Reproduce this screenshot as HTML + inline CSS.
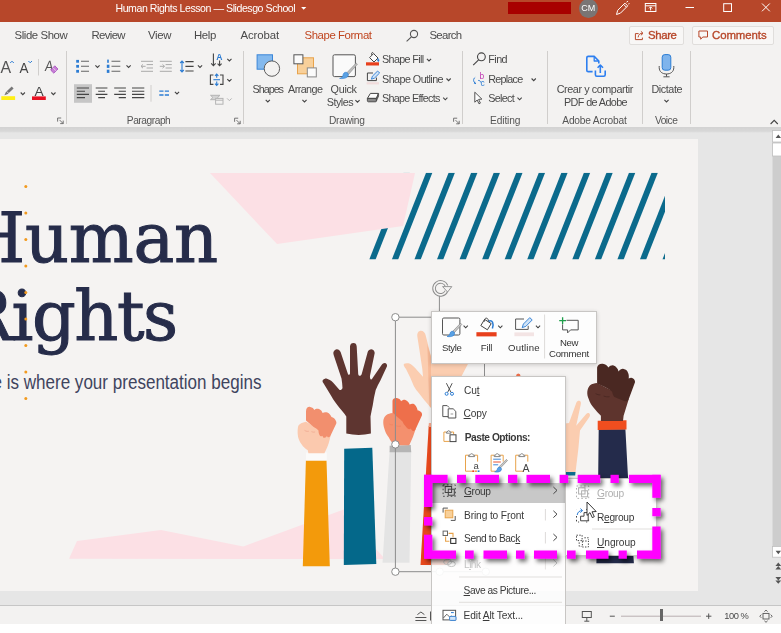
<!DOCTYPE html>
<html lang="en">
<head>
<meta charset="utf-8">
<title>Human Rights Lesson — Slidesgo School</title>
<style>
*{box-sizing:border-box;margin:0;padding:0}
html,body{width:781px;height:633px;overflow:hidden;background:#fff}
body{position:relative;font-family:"Liberation Sans",sans-serif;color:#444;font-size:11px}
.abs{position:absolute}
.t{position:absolute;white-space:nowrap;line-height:1;font-family:"Liberation Sans",sans-serif;color:#4a4a4a}
svg{position:absolute;overflow:visible}
#titlebar{left:0;top:0;width:781px;height:22px;background:#b7472a}
#ribbon{left:0;top:22px;width:781px;height:105px;background:#f3f2f1}
#rshadow{left:0;top:127px;width:781px;height:6px;background:linear-gradient(#d2d2d2 0%,#d8d8d8 70%,#e6e6e6 100%)}
#gap{left:0;top:127px;width:781px;height:479px;background:#e6e6e6}
#slide{left:0;top:139px;width:698px;height:452px;background:#f5f3f2;overflow:hidden}
#status{left:0;top:605px;width:781px;height:19px;background:#f3f2f1;border-top:1px solid #c6c6c6}
.sep{position:absolute;width:1px;background:#d0cecc;top:51px;height:73px}
.btn{position:absolute;border:1px solid #e0dedc;background:#f8f7f6;border-radius:2px}
u{text-decoration:underline;text-underline-offset:1px}
</style>
</head>
<body>
<div id="titlebar" class="abs"></div>
<div id="ribbon" class="abs"></div>
<div id="gap" class="abs"></div>
<div id="rshadow" class="abs"></div>
<div class="sep" style="left:66.1px"></div>
<div class="sep" style="left:242.8px"></div>
<div class="sep" style="left:462.2px"></div>
<div class="sep" style="left:547.3px"></div>
<div class="sep" style="left:642px"></div>
<div class="sep" style="left:690.1px"></div>
<div class="btn" style="left:629px;top:26px;width:55px;height:19px"></div>
<div class="btn" style="left:692px;top:26px;width:82px;height:19px"></div>
<div class="abs" style="left:507.5px;top:2px;width:63.5px;height:11.6px;background:#a80000"></div>
<div class="abs" style="left:578.7px;top:-1.2px;width:19.4px;height:19.4px;border-radius:50%;background:#7a7574"></div>
<svg width="781" height="140" viewBox="0 0 781 140" style="left:0;top:0;will-change:transform" fill="none" stroke-linecap="butt">
<defs>
<path id="chev" d="M-2.1,-1.1 L0,1 L2.1,-1.1" stroke="#444" stroke-width="1.1" fill="none"/>
<g id="dlg" stroke="#666" stroke-width="0.9" fill="none"><path d="M0.4,4 V0.4 H4"/><path d="M2.3,2.3 L6,6 M6,3 V6 H3"/></g>
</defs>
<!-- title bar icons -->
<path d="M303.7,7 l2.6,2.8 l2.6,-2.8 z" fill="#fff" transform="translate(-2.6,0)"/>
<g stroke="#fff" stroke-width="1" fill="none">
<path d="M616.5,14.5 l1.2,-4.2 l7.2,-7.2 l2.8,2.8 l-7.2,7.2 z M623.6,4.4 l2.8,2.8 M626.5,2.2 l1.6,-1 M628.3,4 l1.2,-0.4"/>
<rect x="645.3" y="3.5" width="10.6" height="8"/><path d="M645.3,5.8 h10.6 M650.6,7 v3.4 M649,8.4 l1.6,-1.6 l1.6,1.6"/>
<path d="M685.5,7.5 h8.5"/>
<rect x="723.700" y="3.700" width="7.800" height="7.800"/>
<path d="M762,3.500 l7.800,7.800 M769.800,3.500 l-7.800,7.800"/>
</g>
<!-- search -->
<g stroke="#555" stroke-width="1.1"><circle cx="414" cy="34" r="3.6"/><path d="M411.4,36.8 L406.6,41.4"/></g>
<!-- share / comments icons -->
<g stroke="#b7472a" stroke-width="1" fill="none">
<path d="M638.600,33.600 h-3.200 v6 h7 v-2"/><path d="M638.100,37.400 c0.300,-2.900 2,-4.200 4.600,-4.200 M640.900,31.300 l2.100,2 l-2.100,2"/>
<path d="M698.900,31 h8.600 v6 h-4.600 l-2.200,2.200 v-2.200 h-1.800 z"/>
</g>
<!-- collapse ribbon -->
<path d="M770.6,124 l3.6,-3.6 l3.6,3.6" stroke="#444" stroke-width="1.1"/>

<!-- Font group remnants -->
<text x="0.400" y="73" font-family="Liberation Sans,sans-serif" font-size="17" fill="#555" stroke="none" textLength="10.600" lengthAdjust="spacingAndGlyphs">A</text>
<path d="M10.2,63 l1.8,-1.8 l1.8,1.8" stroke="#2b7cd3" stroke-width="1"/>
<text x="19.6" y="73" font-family="Liberation Sans,sans-serif" font-size="14" fill="#444" stroke="none" textLength="9" lengthAdjust="spacingAndGlyphs">A</text>
<path d="M28.4,61 l1.8,1.8 l1.8,-1.8" stroke="#2b7cd3" stroke-width="1"/>
<path d="M38.5,59 v16.5" stroke="#d0cecc" stroke-width="1"/>
<text x="44.6" y="71" font-family="Liberation Sans,sans-serif" font-size="15" fill="#555" stroke="none" textLength="8.4" lengthAdjust="spacingAndGlyphs" transform="skewX(-6) translate(7.4,0)">A</text>
<path d="M50.6,70 l4.2,-4.2 l3.2,3.2 l-4.2,4.2 z" fill="#c77ed6" stroke="#a74fbf" stroke-width="0.8"/>
<path d="M52.9,67.7 l3.2,3.2" stroke="#f3f2f1" stroke-width="0.7"/>
<!-- highlighter -->
<path d="M4.4,95.2 l1.5,-3.300 l5.800,-5.400 l1.900,1.900 l-5.800,5.600 z" fill="#777" stroke="none"/>
<path d="M6.700,91.400 l2,2" stroke="#f3f2f1" stroke-width="0.8"/>
<rect x="1.3" y="96.2" width="13.8" height="3.8" fill="#ffef16" stroke="none"/>
<use href="#chev" x="22.8" y="93.6"/>
<text x="34.4" y="95.6" font-family="Liberation Sans,sans-serif" font-size="13" fill="#444" stroke="none" textLength="9.2" lengthAdjust="spacingAndGlyphs">A</text>
<rect x="32" y="96.4" width="13.8" height="3.6" fill="#e81123" stroke="none"/>
<use href="#chev" x="53.4" y="93.6"/>
<use href="#dlg" x="57.2" y="117.6"/>

<!-- Paragraph group -->
<g fill="#2b7cd3" stroke="none"><rect x="76.2" y="59.9" width="2.8" height="2.8"/><rect x="76.2" y="64.9" width="2.8" height="2.8"/><rect x="76.2" y="69.9" width="2.8" height="2.8"/></g>
<path d="M81,61.3 h8 M81,66.3 h8 M81,71.3 h8" stroke="#666" stroke-width="1.1"/>
<use href="#chev" x="97.5" y="66.4"/>
<g fill="#2b7cd3" stroke="none"><rect x="107.2" y="59.6" width="1.6" height="3.2"/><rect x="106.8" y="64.7" width="2.6" height="3.2"/><rect x="106.8" y="69.7" width="2.6" height="3.2"/></g>
<path d="M111.5,61.3 h8.8 M111.5,66.3 h8.8 M111.5,71.3 h8.8" stroke="#666" stroke-width="1.1"/>
<use href="#chev" x="128.6" y="66.4"/>
<g stroke="#a9a9a9" stroke-width="1">
<path d="M141,61.3 h12 M141,71.3 h12 M146.6,64.6 h6.4 M146.6,68 h6.4 M141,66.3 h4.6 M143,64.4 l-2,1.9 l2,1.9"/>
<path d="M159.8,61.3 h12 M159.8,71.3 h12 M165.6,64.6 h6.2 M165.6,68 h6.2 M159.8,66.3 h4.6 M162.5,64.4 l2,1.9 l-2,1.9"/>
</g>
<path d="M182,61.2 v10.6 M180.2,63 l1.8,-1.9 l1.8,1.9 M180.2,70 l1.8,1.9 l1.8,-1.9" stroke="#2b7cd3" stroke-width="1.1"/>
<path d="M185.4,61.7 h8.2 M185.4,66.4 h8.2 M185.4,71 h8.2" stroke="#444" stroke-width="1.2"/>
<use href="#chev" x="200" y="66.4"/>
<!-- text direction -->
<g stroke="#444" stroke-width="1.1"><path d="M213.4,53.4 v12.4 M211.2,63.4 l2.2,2.4 l2.2,-2.4 M219.6,60.4 v5.4 M217.6,63.6 l2,2.2 l2,-2.2"/></g>
<text x="216.2" y="59.8" font-family="Liberation Sans,sans-serif" font-size="8.6" fill="#2b7cd3" stroke="none" font-weight="bold">A</text>
<use href="#chev" x="229.4" y="59.9"/>
<!-- align text -->
<g stroke="#444" stroke-width="1.1"><path d="M213.4,75 h-3 v9.4 h3 M220,75 h3 v9.4 h-3"/></g>
<path d="M216.7,74.2 v3.6 M215,75.8 l1.7,-1.8 l1.7,1.8 M216.7,85.2 v-3.6 M215,83.6 l1.7,1.8 l1.7,-1.8" stroke="#2b7cd3" stroke-width="1.1"/>
<path d="M213.4,79.7 h6.6" stroke="#2b7cd3" stroke-width="1.1"/>
<use href="#chev" x="229.4" y="80.2"/>
<!-- smartart disabled -->
<g stroke="#b4b4b4" stroke-width="1"><path d="M210.5,95.3 h9.5 l-2.4,2.2 l2.4,2.2 h-9.5 l2.4,-2.2 z" fill="#d4d4d4"/><rect x="215.6" y="98.4" width="7.4" height="5.8" fill="#f3f2f1"/><path d="M215.6,100.2 h7.4"/></g>
<path d="M227.1,98.4 l2.3,2.3 l2.3,-2.3" stroke="#b4b4b4" stroke-width="1"/>
<!-- align row -->
<rect x="74" y="84.2" width="18" height="18.6" fill="#c6c6c6" stroke="none"/>
<g stroke="#444" stroke-width="1.1">
<path d="M76.8,88 h12.2 M76.8,91.2 h8.2 M76.8,94.4 h12.2 M76.8,97.6 h8.2"/>
<path d="M95.7,88 h11.7 M98.2,91.2 h6.8 M95.7,94.4 h11.7 M98.2,97.6 h6.8"/>
<path d="M114.2,88 h11.7 M118.7,91.2 h7.2 M114.2,94.4 h11.7 M118.7,97.6 h7.2"/>
<path d="M132,88 h12.3 M132,91.2 h12.3 M132,94.4 h12.3 M132,97.6 h12.3"/>
</g>
<path d="M151,85 v16.7" stroke="#d0cecc" stroke-width="1"/>
<path d="M159.3,91.200 h4.200 M164.800,91.200 h4.200 M159.300,95 h4.200 M164.800,95 h4.200" stroke="#2b7cd3" stroke-width="1.300"/>
<use href="#chev" x="177" y="93"/>
<use href="#dlg" x="234.2" y="117.8"/>

<!-- Drawing group -->
<rect x="257.1" y="54.8" width="15.4" height="14.4" fill="#83b9ee" stroke="#3a86d8" stroke-width="1"/>
<circle cx="271.9" cy="68.6" r="7.7" fill="#f3f2f1" stroke="#5b5b5b" stroke-width="1"/>
<use href="#chev" x="267.8" y="100.9"/>
<rect x="297.5" y="57.8" width="16" height="16" fill="#f8d09a" stroke="#e8a34b" stroke-width="1"/>
<rect x="293.9" y="54.8" width="9" height="9" fill="#fbfbfb" stroke="#555" stroke-width="1"/>
<rect x="307.3" y="67.9" width="9" height="9" fill="#fbfbfb" stroke="#888" stroke-width="1"/>
<use href="#chev" x="304.5" y="100.9"/>
<rect x="333" y="54.8" width="22.4" height="21.8" rx="1.5" fill="#fafafa" stroke="#555" stroke-width="1"/>
<path d="M346.6,73 L356.2,63 l1.2,1.2 L348.4,74.6 z" fill="#bdbdbd" stroke="#888" stroke-width="0.6"/>
<path d="M339.6,78.4 c2.4,-0.4 3.2,-2 3.6,-4 c0.6,-2.2 3,-2.8 4.4,-1.4 c1.4,1.6 0.8,3.6 -1.2,4.6 c-2,1 -4.4,1.2 -6.8,0.8 z" fill="#5aa1e3" stroke="#2b7cd3" stroke-width="0.6"/>
<use href="#chev" x="357.5" y="101.2"/>
<!-- shape fill -->
<g stroke="#444" stroke-width="1" fill="none"><path d="M369.6,57.6 l4,-4 l4.4,4.4 l-4,4 z" fill="#fdfdfd"/><path d="M372,55 c-1.2,-2.2 0.6,-3.4 1.6,-1.6"/></g>
<path d="M378,58.4 c1.2,1.6 1.4,2.6 0.4,3.2 c-1,-0.4 -1,-1.6 -0.4,-3.2 z" fill="#2b7cd3" stroke="#2b7cd3" stroke-width="0.6"/>
<rect x="366" y="62.3" width="13" height="3.2" fill="#e8401c" stroke="none"/>
<use href="#chev" x="429" y="59.9"/>
<!-- shape outline -->
<path d="M373,73 h-5.6 v7.6 h9 v-3" stroke="#444" stroke-width="1"/>
<path d="M371.4,79.2 l1,-3 l5.2,-5.2 l2,2 l-5.2,5.2 z" fill="#cfe3f8" stroke="#2b7cd3" stroke-width="0.9"/>
<rect x="366.6" y="82.2" width="12.4" height="2.2" fill="#f1dcdc" stroke="none"/>
<use href="#chev" x="448.6" y="79.6"/>
<!-- shape effects -->
<path d="M367.4,98.4 l3,-5 h8 l-2,5 z" fill="#fdfdfd" stroke="#444" stroke-width="1"/>
<path d="M367.4,98.4 h9 v2.4 c0,0.6 -0.4,1 -1,1 h-7 c-0.6,0 -1,-0.4 -1,-1 z" fill="#8a8a8a" stroke="#444" stroke-width="0.9"/>
<path d="M376.4,98.6 l2.2,-5 v2.6 l-2.2,5 z" fill="#666" stroke="#444" stroke-width="0.6"/>
<use href="#chev" x="445.3" y="98.8"/>
<use href="#dlg" x="453.2" y="117.8"/>

<!-- Editing group -->
<g stroke="#444" stroke-width="1.1"><circle cx="481.4" cy="56.8" r="3.9"/><path d="M478.6,59.8 L473.2,65.2"/></g>
<path d="M475.2,77.4 c-2.2,1.4 -2.2,4.6 0.4,5.8 M476,83.6 l-1.6,-0.2 l0.4,-1.6" stroke="#2b7cd3" stroke-width="1"/>
<path d="M478.2,80.4 c1.6,0 2.4,0.8 2.4,2" stroke="#2b7cd3" stroke-width="1"/>
<text x="479.4" y="79.4" font-family="Liberation Sans,sans-serif" font-size="8.4" fill="#c239b3" stroke="none">b</text>
<text x="480.4" y="85.800" font-family="Liberation Sans,sans-serif" font-size="8.400" fill="#2b7cd3" stroke="none">c</text>
<use href="#chev" x="533.7" y="79.6"/>
<path d="M474.8,92.2 v10 l2.4,-2.2 l1.8,3.8 l1.4,-0.7 l-1.8,-3.7 l3.3,-0.3 z" fill="#fdfdfd" stroke="#444" stroke-width="0.9"/>
<use href="#chev" x="519.6" y="98.8"/>

<!-- Adobe Acrobat -->
<g stroke="#2d7ff0" stroke-width="1.6" fill="none" stroke-linejoin="round">
<path d="M592.6,71.6 h-4.4 c-0.8,0 -1.4,-0.6 -1.4,-1.4 v-12.4 c0,-0.8 0.6,-1.4 1.4,-1.4 h6 l4.6,4.6 v2.6"/>
<path d="M594.2,56.6 v4.4 h4.4" stroke-width="1.3"/>
<path d="M595.4,70.6 v4.2 c0,0.8 0.6,1.4 1.4,1.4 h7 c0.8,0 1.4,-0.6 1.4,-1.4 v-4.2"/>
<path d="M600.3,73 v-7.6 M597.6,67.8 l2.7,-2.8 l2.7,2.8"/>
</g>
<!-- Dictate -->
<rect x="662.2" y="54.6" width="8.6" height="15.6" rx="2.6" fill="#7fb4ec" stroke="#2b7cd3" stroke-width="1"/>
<path d="M659.2,66 v1.6 c0,4.2 3.2,6.4 7.3,6.4 c4.1,0 7.3,-2.2 7.3,-6.4 v-1.6 M666.5,74 v2.6 M663.4,76.8 h6.2" stroke="#555" stroke-width="1"/>
<use href="#chev" x="666.5" y="100.9"/>
</svg>

<div id="slide" class="abs">
<svg width="698" height="452" viewBox="0 139 698 452" style="left:0;top:0">
<!-- teal stripes -->
<g fill="#0b6a8c" clip-path="url(#stripeclip)">
<clipPath id="stripeclip"><rect x="360" y="172.7" width="305" height="86.7"/></clipPath>
<path id="st" d="M403.5,172.7 h6.3 l-34.2,86.7 h-6.3 z"/>
<use href="#st" x="22.55"/><use href="#st" x="45.1"/><use href="#st" x="67.65"/><use href="#st" x="90.2"/><use href="#st" x="112.75"/><use href="#st" x="135.3"/><use href="#st" x="157.85"/><use href="#st" x="180.4"/><use href="#st" x="202.95"/><use href="#st" x="225.5"/><use href="#st" x="248.05"/><use href="#st" x="270.6"/><use href="#st" x="293.15"/>
</g>
<!-- pink shapes -->
<polygon points="210,173 415,173 403,226 277,244" fill="#fce0e5"/>
<polygon points="69,558.8 77,541 161,530 243.3,546.5 364,502 376,549 385,559" fill="#fce0e5"/>
<!-- HANDS -->
<!-- peach open hand behind menus (left) -->
<path d="M420.9,330.8 C418.6,330.8 417,333 417.3,336.2 L419.5,350.4 L422.3,369 L423,376.8 L417.3,370.4 C415,367.6 413,365.600 411.600,364.700 C409.600,363.400 408,363 406.700,363.300 C404.600,363.400 403.200,364 403.800,365.400 C404.200,366.600 405,367.800 406,368.900 L410.200,377.500 L413.800,386 C415.200,388.600 416.800,391 418.800,393.100 L424.400,400.200 L429.400,405.900 L431,408 V440 H462 L459.500,380 L469,362 V355 H431 L430.900,356.100 L428.700,347.600 L425.900,336.200 C425.200,332.800 423.400,330.800 420.900,330.800 Z" fill="#fbcdb0"/>
<path d="M427.300,344.500 L431,357 V407.800 L429.400,405.900 L428.400,380 L428,362 Z" fill="#f7ba98"/>
<ellipse cx="518.3" cy="376" rx="2.2" ry="2.6" fill="#ee6f4b"/>
<!-- red arm -->
<path d="M428.7,426 h20 v139 h-28.2 z" fill="#e8481c"/>
<path d="M428.9,423 h6 v4 h-6.4 z" fill="#f7a58a"/>
<!-- yellow arm + fist -->
<path d="M305.9,460.4 h20.6 l3.3,105.8 h-27 z" fill="#f39a0b"/>
<path d="M306,452.6 h20.8 v7.8 h-20.9 z" fill="#fbfaf9"/>
<path d="M298.3,425.8 C299.5,423.8 302.1,422.4 306,421.700 L330.600,435.600 C329.600,441 328,446.500 325.600,450.800 L324.400,453.200 H308.400 L307.800,450.200 C305.200,448.600 303,446.800 301.900,444.800 C299.300,441.400 297.900,438 297.700,434 C297.500,431 297.700,428 298.300,425.800 Z" fill="#fbc9ae"/>
<path d="M306,420.500 V411.500 C306,408 308,406.600 310.200,406.900 C312.400,407.200 313.600,408.400 314.300,409.900 C315.400,408.600 317.200,408.400 319,409 C320.800,409.800 322,411.200 322.600,412.900 C324,412 326,411.900 327.400,412.600 C329.400,413.600 330.800,415.200 331.500,417.100 C333.400,417.600 335,418.800 335.700,420.500 C336.400,421.600 336.600,422.600 336.300,423.600 L330.600,435.600 C330,437.200 328.600,437.800 327.400,437 L327,435.800 C326.400,437.600 324.600,438.200 323.200,437.400 L322.400,435.800 C321.400,436.800 320,436.200 319.700,435.300 C318.800,434 318.500,432.400 318.500,430.600 C317.200,429 315.400,427.800 313.700,427 Z" fill="#f28f6e"/>
<path d="M304.6,430.4 c1.400,0.900 2.800,1.200 4.200,0.800 M311.500,431.600 c1.200,0.600 2.400,0.700 3.600,0.300" stroke="#efa78f" stroke-width="0.8" fill="none"/>
<!-- teal arm + brown hand -->
<path d="M344.2,448.8 l28.1,-1.1 l4,116.3 l-32.5,1 z" fill="#04688a"/>
<path d="M346.3,433.6 V416.5 C344,413 342,410.500 339.600,408 C336.500,404 333.500,400 331.100,395.700 L323.500,383.300 C322.400,381.800 322.200,380.800 323,380.100 C324,379 325.200,378.500 326.400,378.600 C328.800,379.400 331,380.700 333,382.400 L339.600,390 C340.800,390.400 341.800,389.600 342.500,388 C342.400,385 342,381.800 341.500,378.600 L334,355.900 C333.300,354 333.200,352.600 333.600,351.700 C334.400,350.200 335.500,349.400 336.800,349.200 C338.600,349.400 339.800,350.400 340.600,352 L347.600,373 C348,374.400 348.600,375 349.100,374.800 C349.700,374.600 350,374 350,373 V346.400 C350.200,344.200 351.400,343 353.500,343 C355.400,343 356.500,344.200 356.700,346.400 L358.200,373.900 C358.400,375.200 359.200,376 360.100,375.800 C361,375.600 361.700,374.600 362,373 L367.700,352 C368.400,350 369.700,349.200 371.500,349.200 C373.500,349.600 374.600,351 374.700,353 L370,375.800 C369.800,377.600 370.100,379 370.900,379.500 C371.600,379.500 372.200,378.900 372.800,377.700 L381.400,365.300 C382.600,363.600 383.800,362.800 385.100,363 C386.600,363.500 387.300,364.600 387,366.300 L380.400,380.500 C378.600,383.600 377,386.800 375.700,390 C374.400,395 373.500,400 372.800,405 C372,409 371.200,412.800 370.500,416.500 L370.900,433.600 C363,435.400 354.500,435.400 346.300,433.600 Z" fill="#5e3530"/>
<!-- gray arm + orange fist -->
<path d="M389.600,451 h21.600 l-1.700,111.800 h-27 z" fill="#e4e4e4"/>
<path d="M389.600,445.800 l21.200,-0.800 l0.400,7.300 h-21.600 z" fill="#b5b5b5"/>
<path d="M383.400,420.100 C383.800,418 384.800,416.400 386.100,415.200 C388,414 390,413.400 392.500,413.100 L415.600,429.200 C414,434.400 412,439.400 409.700,444.200 L409.100,445.200 H392 V442.600 C390.600,441 389.600,439.200 388.700,437.300 C386.600,434.600 385.200,431.800 384.400,428.700 C383.400,425.800 383,423 383.400,420.100 Z" fill="#f4906e"/>
<path d="M392.500,413.100 V400.700 C392.900,398.600 394.600,397.700 396.800,398.100 C398.800,398.500 400.400,399.600 401.100,401.300 C402.400,400 403.900,399.500 405.400,399.900 C407.400,400.600 408.900,402.300 409.700,404.500 C411.100,403.600 412.600,403.500 414,404 C415.900,405.400 417.100,407.600 417.700,410.400 C419,410.400 420.100,410.900 421,412 C421.900,413 422.200,414.100 422,415.200 L415.600,429.200 C414.900,430.700 413.500,431.400 412.400,430.800 L410.600,428.600 C409.600,429.600 407.900,429.200 407,428.100 L405.200,425.800 C404,424.600 403.200,423.200 402.700,421.700 C401,420 399.200,418.400 397.300,416.900 Z" fill="#ee6f4b"/>
<path d="M389.400,424 c1.200,0.800 2.400,1 3.600,0.800 M396.200,425.800 c1.600,0.600 3.200,0.700 4.800,0.300" stroke="#ee8461" stroke-width="0.8" fill="none"/>
<!-- right: peach V hand, navy arm, dark fist -->
<path d="M560,424 l9,-1 l7.400,-20.400 c0.800,-1.600 1.800,-2.200 3,-1.800 c1.400,0.600 1.800,1.800 1.400,3.400 l-4.600,21.600 l9.800,-11.600 c1.200,-1.200 2.400,-1.400 3.400,-0.600 c0.800,0.800 0.800,2 0,3.400 l-9.400,13.400 c-0.600,6 -1,12 -1.600,18 l-2.900,24 h-15.500 z" fill="#fbcdb0"/>
<path d="M560,472 h15.500 l-0.300,3.400 h-15.200 z" fill="#0d6e8e"/>
<path d="M598.700,429.300 h26.700 l2.500,46 l6,88 h-37.500 l1.800,-88 z" fill="#242b4b"/>
<path d="M597.700,420.700 l28.800,-0.400 v9.200 l-28.800,0.400 z" fill="#f04e1f"/>
<path d="M587.300,391.700 C587.600,389 588.600,386.800 590.100,385.300 C592,384 594.400,383.300 597.100,383.100 L628.700,399.200 L623.600,415.700 L623,421 H600.900 V415.700 C598.400,413.400 596,410.900 593.900,408.100 C591.600,405.400 589.900,402.500 588.800,399.200 C587.600,396.600 587.100,394.100 587.300,391.700 Z" fill="#5e342d"/>
<path d="M597.100,383.400 V367.600 C597.600,364.800 599.800,363.500 602.800,363.800 C605.400,364.200 607.400,365.500 608.400,367.600 C609.800,365.800 611.600,365.100 613.500,365.400 C616,366.200 617.800,368.300 618.600,371.400 C620,369.400 621.800,368.500 623.600,368.900 C626,369.400 627.600,370.700 628,372.700 C628.800,374.500 629,376.400 628.700,378.400 C630.400,377.600 631.900,377.600 633.100,378.400 C634.500,379.300 635.200,380.600 635,382.200 L628.700,399.200 C627.700,401 626,401.700 624.200,401.100 L617.900,398.600 L614.100,396.700 C613,395.200 612.400,393.500 612.200,391.700 C610,390 607.700,388.500 605.300,387.200 Z" fill="#4a2822"/>
<path d="M595.600,393.600 c1.600,1 3.200,1.400 4.800,1.200 M603.600,396 c2,0.800 4,1 6,0.700" stroke="#4a2822" stroke-width="0.9" fill="none"/>
</svg>
<span class="t" id="h1a" style="left:-34.4px;top:64.7px;font-family:'DejaVu Serif',serif;font-size:68.5px;color:#262c4a;-webkit-text-stroke:1px #262c4a;letter-spacing:-0.3px">Human</span>
<span class="t" id="h1b" style="left:-38.5px;top:143px;font-family:'DejaVu Serif',serif;font-size:68.5px;color:#262c4a;-webkit-text-stroke:1px #262c4a;letter-spacing:-1.5px">Rights</span>
<span class="t" id="sub" style="left:-34.8px;top:233.6px;font-size:19.5px;color:#3f445e;transform:scaleX(0.874);transform-origin:0 0">Here is where your presentation begins</span>
<svg width="698" height="452" viewBox="0 139 698 452" style="left:0;top:0">
<!-- dotted guide -->
<g fill="#f29a1f"><circle cx="25.8" cy="186.6" r="1.5"/><circle cx="25.8" cy="213.1" r="1.5"/><circle cx="25.8" cy="239.6" r="1.5"/><circle cx="25.8" cy="266.1" r="1.5"/><circle cx="25.8" cy="292.6" r="1.5"/><circle cx="25.8" cy="319.1" r="1.5"/><circle cx="25.8" cy="345.6" r="1.5"/><circle cx="25.8" cy="372.1" r="1.5"/><circle cx="25.8" cy="398.6" r="1.5"/></g>
</svg>

</div>
<svg width="781" height="633" viewBox="0 0 781 633" style="left:0;top:0" fill="none">
<g stroke="#8c8c8c" stroke-width="1">
<path d="M395.4,317.2 V571.7 M395.4,317.2 H432 M395.4,571.7 H431.500 M439.400,296 V312 M484.500,362 V377"/>
<path d="M431.500,571.700 H486" stroke="#c4c4c4"/>
<circle cx="395.4" cy="317.2" r="3.7" fill="#fff"/>
<circle cx="395.4" cy="444.4" r="3.7" fill="#fff"/>
<circle cx="395.4" cy="571.7" r="3.7" fill="#fff"/>
<circle cx="439.700" cy="571.700" r="3.700" fill="#fff" stroke="#cfcfcf"/>
<circle cx="485.800" cy="571.700" r="3.700" fill="#fff" stroke="#cfcfcf"/>
</g>
<!-- rotate handle -->
<g>
<path d="M446.4,291.2 A6.5,6.5 0 1 1 446.6,286" stroke="#8c8c8c" stroke-width="3.6"/>
<path d="M446.4,291.2 A6.5,6.5 0 1 1 446.6,286" stroke="#f5f3f2" stroke-width="1.7"/>
<path d="M442.6,286.6 h9.2 l-4.2,5.4 z" fill="#f5f3f2" stroke="#8c8c8c" stroke-width="0.9"/>
</g>
</svg>

<div id="status" class="abs"></div>
<svg width="781" height="633" viewBox="0 0 781 633" style="left:0;top:0" fill="none">
<!-- scrollbar -->
<rect x="772.500" y="130.500" width="9" height="416" fill="#cdcdcd"/>
<rect x="772.500" y="130.500" width="9" height="11.500" fill="#fff" stroke="#c0c0c0" stroke-width="0.800"/>
<rect x="772.500" y="143" width="9" height="13" fill="#fff" stroke="#c0c0c0" stroke-width="0.800"/>
<rect x="772.500" y="546.600" width="9" height="10.600" fill="#fff" stroke="#c0c0c0" stroke-width="0.800"/>
<path d="M775.600,138 l2.700,-3.400 l2.700,3.400 z M775.600,550.800 l2.700,3.400 l2.700,-3.400 z" fill="#555"/>
<path d="M775.400,566 l2.900,-3.400 l2.900,3.400 z M775.400,569.400 l2.900,-3.400 l2.900,3.400 z M775.400,577 l2.900,3.400 l2.900,-3.400 z M775.400,580.400 l2.900,3.400 l2.900,-3.400 z" fill="#555"/>
<!-- status bar -->
<g stroke="#555" stroke-width="1">
<path d="M415.400,617.500 h11 M415.400,620.500 h11 M417.400,614.600 l3.500,-2.600 l3.500,2.600 M430.500,611.500 v9"/>
<rect x="582.300" y="611.500" width="9" height="6"/><path d="M586.800,617.500 v3.600 M584.300,621.200 h5"/>
<path d="M609.800,616.200 h5 M706,616.200 h5.400 M708.700,613.500 v5.400"/>
<path d="M760.200,616.200 h11.600 M766,610.400 v11.600" stroke-width="0"/>
</g>
<path d="M621,616.200 h80" stroke="#b8aeb0" stroke-width="1"/>
<rect x="660" y="609" width="3" height="12" fill="#666"/>
<g stroke="#555" stroke-width="0.900"><rect x="763" y="613.400" width="6" height="5.600"/><path d="M764.400,611.600 l1.600,-1.500 l1.600,1.500 M764.400,620.800 l1.600,1.500 l1.600,-1.500 M761.300,614.600 l-1.500,1.600 l1.500,1.600 M770.700,614.600 l1.500,1.600 l-1.500,1.600"/></g>
</svg>

<!-- mini toolbar -->
<div class="abs" style="left:431px;top:311px;width:166px;height:53px;background:#fdfdfd;border:1px solid #c8c6c4;box-shadow:0 1px 4px rgba(0,0,0,.18)"></div>
<!-- context menu -->
<div class="abs" style="left:431px;top:376px;width:135px;height:180px;background:#fff;border:1px solid #c8c6c4;border-bottom:none;box-shadow:0 1px 4px rgba(0,0,0,.15)"></div>
<div class="abs" style="left:431px;top:556px;width:135px;height:68px;background:rgba(255,255,255,.84);border-left:1px solid #c8c6c4;border-right:1px solid #c8c6c4"></div>
<div class="abs" style="left:432px;top:483px;width:133px;height:19.6px;background:#c8c8c8"></div>
<!-- submenu -->
<div class="abs" style="left:565px;top:478px;width:92px;height:77.5px;background:#fff;border:1px solid #c8c6c4;box-shadow:1px 2px 5px rgba(0,0,0,.25)"></div>
<svg width="781" height="633" viewBox="0 0 781 633" style="left:0;top:0;will-change:transform" fill="none">
<defs>
<path id="mchev" d="M0,0 l3.6,3.4 l-3.6,3.4" stroke="#444" stroke-width="1" fill="none"/>
<g id="clipb"><path d="M3.6,1.6 H0.5 V17.6 H8.6 M9.6,1.6 H12.6 V8" stroke="#e8a34b" stroke-width="1" fill="none"/><path d="M3.6,3 V1.6 H5 C5,-0.4 8.2,-0.4 8.2,1.6 H9.6 V3 Z" stroke="#777" stroke-width="0.9" fill="#fff"/></g>
</defs>
<!-- mini toolbar icons -->
<rect x="442.5" y="318" width="17.4" height="17" rx="1.3" fill="#fcfcfc" stroke="#555" stroke-width="1"/>
<path d="M452.6,331.4 L460.6,323.2 l1.2,1.2 L454,333 z" fill="#c9c9c9" stroke="#777" stroke-width="0.6"/>
<path d="M447,336.4 c2,-0.4 2.800,-1.600 3.100,-3.300 c0.500,-1.900 2.600,-2.400 3.800,-1.200 c1.200,1.400 0.700,3.100 -1,4 c-1.700,0.900 -3.800,1 -5.900,0.500 z" fill="#5aa1e3" stroke="#2b7cd3" stroke-width="0.6"/>
<use href="#chev" x="465.7" y="326.8"/>
<g stroke="#444" stroke-width="1" fill="none"><path d="M484.600,319.400 l-3.800,6.200 l6.600,4.200 l3.800,-6.200 z" fill="#fdfdfd"/><path d="M484.400,321.600 c-0.600,-3.400 2.600,-4.600 3.600,-2.200 l0.800,2.400"/></g>
<path d="M488.600,321.200 c3.800,-1.600 5.600,2.200 3.800,7.400" stroke="#2b7cd3" stroke-width="1.500" fill="none"/>
<rect x="476.4" y="332.2" width="20.2" height="4.2" fill="#e8401c"/>
<use href="#chev" x="500.3" y="326.8"/>
<path d="M524,319 h-8.400 v10.400 h12.600 v-3.600" stroke="#555" stroke-width="1"/>
<path d="M522.200,327.600 l1.200,-3.600 l6.400,-6.400 l2.400,2.400 l-6.400,6.400 z" fill="#cfe3f8" stroke="#2b7cd3" stroke-width="0.9"/>
<rect x="514.4" y="332.400" width="19.600" height="3.800" fill="#f3e4e4"/>
<use href="#chev" x="538" y="326.800"/>
<path d="M544.600,314.500 v44" stroke="#dddbd9" stroke-width="1"/>
<path d="M566.5,320.300 h11.700 v9.600 h-7.600 l-3,3 v-3 h-5 v-5.600" stroke="#555" stroke-width="1"/>
<path d="M562.600,317.200 v6.800 M559.200,320.600 h6.800" stroke="#1e9e4a" stroke-width="1.300"/>

<!-- context menu icons -->
<g stroke="#555" stroke-width="1"><path d="M446.400,383.200 l4.600,9.200 M452.200,383.200 l-4.600,9.200"/></g>
<g stroke="#2b7cd3" stroke-width="1" fill="#fff"><circle cx="446.600" cy="393.800" r="1.500"/><circle cx="452" cy="393.800" r="1.500"/></g>
<g stroke="#555" stroke-width="1" fill="#fff"><path d="M449,416.600 h-6.200 v-11 h4.400 l2,2"/><path d="M448.200,408.800 h5 l2.600,2.600 v6.600 h-7.600 z"/><path d="M450.600,414 h2.600" stroke="#999"/></g>
<g transform="translate(443.400,430.600)"><path d="M3,1.400 H0.500 V10.800 H6 M7.600,1.400 H10.200 V3.600" stroke="#e8a34b" stroke-width="1"/><path d="M3,2.600 V1.400 H4 C4,-0.400 6.600,-0.400 6.600,1.400 H7.600 V2.600 Z" stroke="#777" stroke-width="0.900" fill="#fff"/><rect x="6.600" y="4.200" width="6" height="6.800" fill="#fff" stroke="#444" stroke-width="1"/></g>
<use href="#clipb" x="465" y="453.600"/>
<text x="473.600" y="469.400" font-family="Liberation Sans,sans-serif" font-size="9.500" fill="#444">a</text>
<rect x="472.400" y="470.400" width="1.900" height="1.600" fill="#e8401c"/><rect x="475" y="470.400" width="1.900" height="1.600" fill="#e8a34b"/><rect x="477.600" y="470.400" width="1.900" height="1.600" fill="#2b7cd3"/>
<use href="#clipb" x="490.600" y="453.600"/>
<path d="M493.200,459.200 h7.600 M493.200,464.800 h5" stroke="#2b7cd3" stroke-width="0.900"/><path d="M493.200,462 h7.600" stroke="#e8401c" stroke-width="0.900"/>
<path d="M499.400,466.400 L506.400,459.400 l1.100,1.100 L500.600,467.800 z" fill="#c9c9c9" stroke="#777" stroke-width="0.600"/>
<path d="M494.600,471.800 c1.800,-0.400 2.500,-1.500 2.800,-3 c0.500,-1.700 2.400,-2.200 3.500,-1.100 c1.100,1.300 0.600,2.900 -0.900,3.700 c-1.600,0.800 -3.500,0.900 -5.400,0.400 z" fill="#5aa1e3" stroke="#2b7cd3" stroke-width="0.600"/>
<use href="#clipb" x="515.200" y="453.600"/>
<text x="522.400" y="471.600" font-family="Liberation Sans,sans-serif" font-size="10.500" fill="#444">A</text>

<!-- group icon -->
<rect x="443.100" y="484.900" width="12.200" height="11.400" stroke="#444" stroke-width="1" stroke-dasharray="1.600 2.200" />
<rect x="445.200" y="486.500" width="6.400" height="6" stroke="#444" stroke-width="1"/>
<rect x="448.300" y="489.200" width="6" height="6" stroke="#444" stroke-width="1"/>
<use href="#mchev" x="553.400" y="487"/>
<!-- bring to front -->
<path d="M443.100,512.600 v-4.500 h4.800 M455.200,516 v4.400 h-4.400" stroke="#555" stroke-width="1"/>
<rect x="445.200" y="510.200" width="7.600" height="7.600" fill="#f8d09a" stroke="#e8a34b" stroke-width="1"/>
<path d="M545.400,509 v11.500" stroke="#dddbd9" stroke-width="1"/>
<use href="#mchev" x="553.400" y="510.800"/>
<!-- send to back -->
<rect x="443.100" y="531.100" width="4.400" height="4.400" stroke="#666" stroke-width="1" fill="#fff"/>
<path d="M445.600,536.600 v4.600 h3.800 M448.600,533.400 h4.400 v3.800" stroke="#e8a34b" stroke-width="1.100"/>
<rect x="450.700" y="538.400" width="5.200" height="5" stroke="#222" stroke-width="1" fill="#fff"/>
<path d="M545.400,532 v11.500" stroke="#dddbd9" stroke-width="1"/>
<use href="#mchev" x="553.400" y="534"/>
<!-- link -->
<g stroke="#c6c6c6" stroke-width="1"><ellipse cx="447.600" cy="562" rx="4" ry="2.600"/><ellipse cx="451.400" cy="564" rx="4" ry="2.600"/></g>
<path d="M545.400,558 v11.500" stroke="#e6e4e2" stroke-width="1"/>
<path d="M553.400,559.600 l3.600,3.400 l-3.600,3.400" stroke="#c6c6c6" stroke-width="1"/>
<path d="M459,577 h103 M459,602.300 h103" stroke="#e1dfdd" stroke-width="1"/>
<!-- edit alt text -->
<rect x="443" y="610.300" width="12.600" height="9.600" stroke="#555" stroke-width="1" fill="#fff"/>
<path d="M443.400,618 l3.400,-3.800 l3,3 l1.600,-1.400" stroke="#555" stroke-width="0.900"/>
<rect x="449.600" y="616.400" width="6.400" height="4" rx="0.800" fill="#cfe3f8" stroke="#2b7cd3" stroke-width="0.900"/>
<path d="M451,612.600 h2.800" stroke="#2b7cd3" stroke-width="1"/>

<!-- submenu icons -->
<g stroke="#b0b0b0" stroke-width="1"><rect x="576.500" y="486" width="12.200" height="12.400" stroke-dasharray="1.600 2.200"/><rect x="578.600" y="487.800" width="6.400" height="6.200"/><rect x="581.600" y="490.800" width="6" height="6"/></g>
<g stroke="#444" stroke-width="1"><path d="M576.500,516 v6 h2.600 M586.200,509.600 h2.400 v2.600 M588.600,519.600 v2.400 h-2.400 M576.500,509.600 v0.100" stroke-dasharray="1.600 2.200"/><path d="M580.600,520.800 v-4.600 h3.400 v-3.600 h4.200 v8.200 z" fill="#fff"/></g>
<path d="M577.200,515 c0.400,-3 2.400,-4.400 5,-4.400 M580.400,508.600 l2.200,2 l-2.200,2" stroke="#2b7cd3" stroke-width="1"/>
<path d="M592,529 h61" stroke="#e1dfdd" stroke-width="1"/>
<g stroke="#444" stroke-width="1"><rect x="576.500" y="535.200" width="5.600" height="5.400" stroke-dasharray="1.400 1.400"/><rect x="582.400" y="541" width="6" height="6" stroke-dasharray="1.400 1.400"/><path d="M584.400,537.800 h4 v2.200 M579.200,542.400 v4 h2.200" stroke-dasharray="1.400 1.400"/></g>

<!-- magenta dashed highlight -->
<g fill="#ff00ff" filter="url(#mshadow)">
<filter id="mshadow" x="-5%" y="-15%" width="112%" height="140%"><feDropShadow dx="2.600" dy="3" stdDeviation="2.100" flood-color="#000" flood-opacity="0.550"/></filter>
<!-- top -->
<rect x="424" y="474.800" width="23.600" height="8.200"/><rect x="457" y="474.800" width="9" height="8.200"/><rect x="475.300" y="474.800" width="23.700" height="8.200"/><rect x="508" y="474.800" width="9.300" height="8.200"/><rect x="526.500" y="474.800" width="23.500" height="8.200"/><rect x="559.600" y="474.800" width="8.600" height="8.200"/><rect x="577.700" y="474.800" width="22.500" height="8.200"/><rect x="610.500" y="474.800" width="8.300" height="8.200"/><rect x="629" y="474.800" width="31.600" height="8.200"/>
<!-- bottom -->
<rect x="424" y="550.500" width="32" height="8.200"/><rect x="465" y="550.500" width="8.700" height="8.200"/><rect x="483.500" y="550.500" width="23.500" height="8.200"/><rect x="516" y="550.500" width="8.500" height="8.200"/><rect x="534" y="550.500" width="23" height="8.200"/><rect x="567" y="550.500" width="8.600" height="8.200"/><rect x="586" y="550.500" width="22.400" height="8.200"/><rect x="618.600" y="550.500" width="8.200" height="8.200"/><rect x="637" y="550.500" width="23.600" height="8.200"/>
<!-- left -->
<rect x="424" y="474.800" width="8.300" height="32.200"/><rect x="424" y="517" width="8.300" height="8.500"/><rect x="424" y="534.700" width="8.300" height="24"/>
<!-- right -->
<rect x="652.300" y="474.800" width="8.300" height="23"/><rect x="652.300" y="508" width="8.300" height="8.200"/><rect x="652.300" y="526.500" width="8.300" height="32.200"/>
</g>
<!-- mouse cursor -->
<path d="M587,502 v13.400 l3,-2.800 l2.300,5 l2,-0.900 l-2.300,-4.900 l4.200,-0.300 z" fill="#fff" stroke="#222" stroke-width="0.900" stroke-linejoin="round"/>
</svg>

<div class="abs" style="left:0;top:0;width:781px;height:633px;will-change:transform;transform:translateZ(0)">
<span class="t" style="left:115.5px;top:2.7px;font-size:10.6px;letter-spacing:-0.46px;color:#fff;">Human Rights Lesson — Slidesgo School</span>
<span class="t" style="left:581.2px;top:4.1px;font-size:9px;letter-spacing:0.10px;color:#fff;">CM</span>
<span class="t" style="left:14.6px;top:29.5px;font-size:11.4px;letter-spacing:-0.43px;">Slide Show</span>
<span class="t" style="left:91.4px;top:29.5px;font-size:11.4px;letter-spacing:-0.63px;">Review</span>
<span class="t" style="left:148.0px;top:29.5px;font-size:11.4px;letter-spacing:-0.37px;">View</span>
<span class="t" style="left:194.0px;top:29.5px;font-size:11.4px;letter-spacing:-0.36px;">Help</span>
<span class="t" style="left:240.5px;top:29.5px;font-size:11.4px;letter-spacing:-0.11px;">Acrobat</span>
<span class="t" style="left:304.5px;top:29.5px;font-size:11.4px;letter-spacing:-0.43px;color:#c0451f;">Shape Format</span>
<span class="t" style="left:429.4px;top:29.5px;font-size:11.4px;letter-spacing:-0.67px;">Search</span>
<span class="t" style="left:648.0px;top:30.3px;font-size:11.4px;letter-spacing:-0.38px;color:#b7472a;-webkit-text-stroke:0.35px #b7472a;">Share</span>
<span class="t" style="left:712.0px;top:30.3px;font-size:11.4px;letter-spacing:-0.06px;color:#b7472a;-webkit-text-stroke:0.35px #b7472a;">Comments</span>
<span class="t" style="left:252.5px;top:83.6px;font-size:10.8px;letter-spacing:-1.02px;">Shapes</span>
<span class="t" style="left:288.0px;top:83.6px;font-size:10.8px;letter-spacing:-0.57px;">Arrange</span>
<span class="t" style="left:330.6px;top:83.6px;font-size:10.8px;letter-spacing:-0.30px;">Quick</span>
<span class="t" style="left:326.8px;top:96.7px;font-size:10.8px;letter-spacing:-0.53px;">Styles</span>
<span class="t" style="left:382.0px;top:54.4px;font-size:10.8px;letter-spacing:-0.65px;">Shape Fill</span>
<span class="t" style="left:382.0px;top:74.1px;font-size:10.8px;letter-spacing:-0.57px;">Shape Outline</span>
<span class="t" style="left:382.0px;top:93.3px;font-size:10.8px;letter-spacing:-0.72px;">Shape Effects</span>
<span class="t" style="left:488.3px;top:54.4px;font-size:10.8px;letter-spacing:-0.58px;">Find</span>
<span class="t" style="left:488.3px;top:74.1px;font-size:10.8px;letter-spacing:-0.79px;">Replace</span>
<span class="t" style="left:488.3px;top:93.3px;font-size:10.8px;letter-spacing:-0.72px;">Select</span>
<span class="t" style="left:556.7px;top:83.6px;font-size:10.8px;letter-spacing:-0.42px;">Crear y compartir</span>
<span class="t" style="left:564.0px;top:96.7px;font-size:10.8px;letter-spacing:-0.60px;">PDF de Adobe</span>
<span class="t" style="left:651.5px;top:83.6px;font-size:10.8px;letter-spacing:-0.44px;">Dictate</span>
<span class="t" style="left:126.8px;top:115.7px;font-size:10.2px;letter-spacing:-0.45px;color:#555;">Paragraph</span>
<span class="t" style="left:329.0px;top:115.7px;font-size:10.2px;letter-spacing:-0.24px;color:#555;">Drawing</span>
<span class="t" style="left:490.0px;top:115.7px;font-size:10.2px;letter-spacing:-0.11px;color:#555;">Editing</span>
<span class="t" style="left:562.3px;top:115.7px;font-size:10.2px;letter-spacing:-0.20px;color:#555;">Adobe Acrobat</span>
<span class="t" style="left:655.0px;top:115.7px;font-size:10.2px;letter-spacing:-0.52px;color:#555;">Voice</span>
<span class="t" style="left:724.3px;top:611.7px;font-size:9.3px;letter-spacing:-0.45px;">100 %</span>
<span class="t" style="left:442.0px;top:343.1px;font-size:9.6px;letter-spacing:-0.39px;color:#333;">Style</span>
<span class="t" style="left:480.8px;top:343.1px;font-size:9.6px;letter-spacing:-0.19px;color:#333;">Fill</span>
<span class="t" style="left:508.0px;top:343.1px;font-size:9.6px;letter-spacing:0.18px;color:#333;">Outline</span>
<span class="t" style="left:560.0px;top:338.1px;font-size:9.6px;letter-spacing:-0.40px;color:#333;">New</span>
<span class="t" style="left:549.0px;top:349.1px;font-size:9.6px;letter-spacing:-0.23px;color:#333;">Comment</span>
<span class="t" style="left:464.0px;top:385.7px;font-size:10.2px;letter-spacing:-0.16px;color:#3a3a3a;">Cu<u>t</u></span>
<span class="t" style="left:463.6px;top:408.7px;font-size:10.2px;letter-spacing:-0.20px;color:#3a3a3a;"><u>C</u>opy</span>
<span class="t" style="left:464.7px;top:433.4px;font-size:10.2px;letter-spacing:-0.47px;color:#3a3a3a;font-weight:bold;">Paste Options:</span>
<span class="t" style="left:464.0px;top:487.4px;font-size:10.2px;letter-spacing:-0.33px;color:#3a3a3a;"><u>G</u>roup</span>
<span class="t" style="left:464.0px;top:510.6px;font-size:10.2px;letter-spacing:-0.12px;color:#3a3a3a;">Bring to F<u>r</u>ont</span>
<span class="t" style="left:464.0px;top:533.9px;font-size:10.2px;letter-spacing:-0.38px;color:#3a3a3a;">Send to Bac<u>k</u></span>
<span class="t" style="left:464.0px;top:559.7px;font-size:10.2px;letter-spacing:-0.55px;color:#c4c4c4;">L<u>i</u>nk</span>
<span class="t" style="left:463.6px;top:585.7px;font-size:10.2px;letter-spacing:-0.42px;color:#3a3a3a;"><u>S</u>ave as Picture...</span>
<span class="t" style="left:463.6px;top:611.3px;font-size:10.2px;letter-spacing:-0.13px;color:#3a3a3a;">Edit <u>A</u>lt Text...</span>
<span class="t" style="left:597.0px;top:488.7px;font-size:10.2px;letter-spacing:-0.31px;color:#b0b0b0;"><u>G</u>roup</span>
<span class="t" style="left:597.0px;top:512.7px;font-size:10.2px;letter-spacing:-0.30px;color:#3a3a3a;">R<u>e</u>group</span>
<span class="t" style="left:597.0px;top:538.2px;font-size:10.2px;letter-spacing:-0.06px;color:#3a3a3a;"><u>U</u>ngroup</span>
</div>
</body>
</html>
